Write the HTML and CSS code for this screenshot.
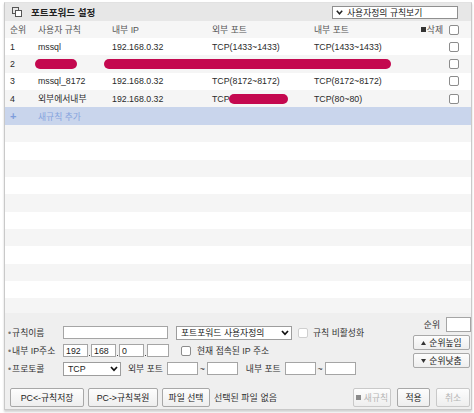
FILE: index.html
```html
<!DOCTYPE html>
<html lang="ko">
<head>
<meta charset="utf-8">
<link rel="stylesheet" href="styles.css">
</head>
<body>
<div class="frame">
  <div class="titlebar">
    <svg class="ticon" width="10" height="10" viewBox="0 0 10 10"><rect x="0.5" y="0.5" width="6" height="6" fill="none" stroke="#555"/><rect x="3.5" y="3.5" width="6" height="6" fill="#fff" stroke="#555"/></svg>
    <span class="title">포트포워드 설정</span>
    <div class="viewsel"><svg width="7" height="5" viewBox="0 0 7 5"><path d="M0.8 0.8 L3.5 3.8 L6.2 0.8" fill="none" stroke="#222" stroke-width="1.5"/></svg><span>사용자정의 규칙보기</span></div>
  </div>
  <div class="table">
    <div class="row head"><span>순위</span><span>사용자 규칙</span><span>내부 IP</span><span>외부 포트</span><span>내부 포트</span><span class="last"><i class="sq"></i>삭제<b class="cb"></b></span></div>
    <div class="row"><span>1</span><span>mssql</span><span>192.168.0.32</span><span>TCP(1433~1433)</span><span>TCP(1433~1433)</span><span class="last"><b class="cb"></b></span></div>
    <div class="row alt"><span>2</span><span><i class="redact r1"></i></span><span class="wide"><i class="redact r2"></i></span><span class="last"><b class="cb"></b></span></div>
    <div class="row"><span>3</span><span>mssql_8172</span><span>192.168.0.32</span><span>TCP(8172~8172)</span><span>TCP(8172~8172)</span><span class="last"><b class="cb"></b></span></div>
    <div class="row alt"><span>4</span><span>외부에서내부</span><span>192.168.0.32</span><span class="tcpr">TCP<i class="redact r3"></i></span><span>TCP(80~80)</span><span class="last"><b class="cb"></b></span></div>
    <div class="row add"><span class="plus">+</span><span>새규칙 추가</span></div>
    <div class="row alt"></div><div class="row"></div>
    <div class="row alt"></div><div class="row"></div>
    <div class="row alt"></div><div class="row"></div>
    <div class="row alt"></div><div class="row"></div>
    <div class="row alt"></div><div class="row"></div>
    <div class="row alt"></div>
  </div>
  <div class="panel">
    <div class="fields">
      <div class="frow">
        <span class="lbl"><em>•</em>규칙이름</span>
        <span class="inp w-name"></span>
        <span class="sel w-type"><span>포트포워드 사용자정의</span><svg width="8" height="6" viewBox="0 0 8 6"><path d="M1 1 L4 4.3 L7 1" fill="none" stroke="#111" stroke-width="1.7"/></svg></span>
        <b class="cb dis m6"></b><span class="txt m5">규칙 비활성화</span>
      </div>
      <div class="frow">
        <span class="lbl"><em>•</em>내부 IP주소</span>
        <span class="inp w-ip">192</span><span class="dot"></span>
        <span class="inp w-ip">168</span><span class="dot"></span>
        <span class="inp w-ip">0</span><span class="dot"></span>
        <span class="inp w-ip4"></span>
        <b class="cb m12"></b><span class="txt m6">현재 접속된 IP 주소</span>
      </div>
      <div class="frow">
        <span class="lbl"><em>•</em>프로토콜</span>
        <span class="sel w-proto"><span>TCP</span><svg width="8" height="6" viewBox="0 0 8 6"><path d="M1 1 L4 4.3 L7 1" fill="none" stroke="#111" stroke-width="1.7"/></svg></span>
        <span class="txt m7">외부 포트</span>
        <span class="inp w-port m4"></span><span class="tilde">~</span><span class="inp w-port"></span>
        <span class="txt m8">내부 포트</span>
        <span class="inp w-port m4"></span><span class="tilde">~</span><span class="inp w-port"></span>
      </div>
    </div>
    <div class="rank">
      <div class="rrow"><span class="txt">순위</span><span class="inp w-rank"></span></div>
      <span class="btn rbtn"><svg width="5" height="4" viewBox="0 0 5 4"><path d="M0 4 L2.5 0 L5 4Z" fill="#333"/></svg>순위높임</span>
      <span class="btn rbtn"><svg width="5" height="4" viewBox="0 0 5 4"><path d="M0 0 L2.5 4 L5 0Z" fill="#333"/></svg>순위낮춤</span>
    </div>
    <div class="actions">
      <span class="btn b-save">PC&lt;-규칙저장</span>
      <span class="btn b-load">PC-&gt;규칙복원</span>
      <span class="btn b-file">파일 선택</span>
      <span class="nofile">선택된 파일 없음</span>
      <div class="right">
        <span class="btn disabled b-new"><i class="sq gray"></i>새규칙</span>
        <span class="btn b-ok">적용</span>
        <span class="btn disabled b-cancel">취소</span>
      </div>
    </div>
  </div>
</div>
</body>
</html>
```

FILE: styles.css
```css
* { box-sizing: border-box; }
html, body { margin: 0; padding: 0; background: #fff; }
body {
  font-family: "Liberation Sans", "Noto Sans CJK KR", sans-serif;
  font-size: 8.8px;
  color: #333;
  width: 474px;
  height: 413px;
  overflow: hidden;
}
.frame {
  margin: 2px 0 0 4px;
  width: 468px;
  height: 408px;
  border: 1px solid #c9c9c9;
  border-top-color: #e2e2e2;
  box-shadow: 0 2px 2px rgba(0,0,0,0.18);
  display: flex;
  flex-direction: column;
  background: #fff;
}
.titlebar {
  height: 18px;
  background: #e7e7e7;
  display: flex;
  align-items: center;
  padding-left: 7px;
  flex: none;
}
.ticon { display: block; }
.title {
  margin-left: 9px;
  font-weight: bold;
  font-size: 9.6px;
  color: #222;
}
.viewsel {
  margin-left: auto;
  margin-right: 13px;
  width: 126px;
  height: 13px;
  background: #fff;
  border: 1px solid #8f8f8f;
  display: flex;
  align-items: center;
  padding-left: 3px;
  color: #222;
}
.viewsel svg { margin-right: 4px; }
.table {
  height: 292px;
  overflow: hidden;
  flex: none;
}
.row {
  display: grid;
  grid-template-columns: 28px 74px 100px 102px 1fr 60px;
  align-items: center;
  height: 17.3px;
  padding-left: 5px;
  white-space: nowrap;
  color: #2a2a2a;
}
.row.head { height: 17px; background: #f6f6f6; color: #555; }
.row.alt { background: #f5f5f5; }
.row.add { background: #c9d5ec; color: #86a4de; height: 18px; }
.plus { font-size: 11px; font-weight: bold; color: #7e9ddb; }
.last {
  grid-column: 6;
  display: flex;
  align-items: center;
  justify-content: flex-end;
  padding-right: 12px;
}
.wide { grid-column: 3 / 6; }
.sq {
  display: inline-block;
  width: 5px;
  height: 5px;
  background: #333;
  margin-right: 1px;
}
.sq.gray { background: #8a8a8a; margin-right: 3px; }
.cb {
  display: inline-block;
  width: 10px;
  height: 10px;
  border: 1px solid #8c8c8c;
  border-radius: 2px;
  background: #fff;
}
.head .cb { margin-left: 6px; }
.cb.dis { border-color: #cfcfcf; }
.redact {
  display: block;
  height: 10px;
  border-radius: 5px;
  background: #c4084f;
}
.r1 { width: 42px; margin-left: -3px; }
.r2 { width: 287px; margin-left: -8px; }
.tcpr { display: flex; align-items: center; }
.r3 { width: 59px; margin-left: -1px; display: inline-block; }
.panel {
  flex: 1;
  background: #efefef;
  display: grid;
  grid-template-columns: 1fr auto;
  padding: 0 0 0 3px;
}
.fields {
  padding-top: 13px;
  display: flex;
  flex-direction: column;
  gap: 5px;
}
.frow {
  display: flex;
  align-items: center;
  height: 13px;
  white-space: nowrap;
}
.lbl { width: 55px; color: #333; }
.lbl em { font-style: normal; color: #777; margin-right: 1px; }
.inp {
  display: inline-flex;
  align-items: center;
  height: 13px;
  background: #fff;
  border: 1px solid #a5a5a5;
  padding-left: 2px;
  color: #222;
}
.w-name { width: 105px; }
.w-ip { width: 25px; }
.w-ip4 { width: 22px; }
.w-port { width: 31px; }
.w-rank { width: 25px; height: 15px; margin-left: 6px; }
.dot { width: 3px; height: 13px; position: relative; }
.dot::after { content: ""; position: absolute; left: 1px; bottom: 1px; width: 1px; height: 1px; background: #444; }
.sel {
  display: inline-flex;
  align-items: center;
  justify-content: space-between;
  height: 14px;
  background: #fff;
  border: 1px solid #9d9d9d;
  padding: 0 2px 0 4px;
  color: #222;
}
.w-type { width: 116px; margin-left: 8px; }
.w-proto { width: 58px; }
.txt { color: #333; }
.tilde { width: 9px; text-align: center; }
.m4 { margin-left: 4px; }
.m5 { margin-left: 5px; }
.m6 { margin-left: 6px; }
.m7 { margin-left: 7px; }
.m8 { margin-left: 8px; }
.m12 { margin-left: 12px; }
.rank {
  padding-top: 4px;
  display: flex;
  flex-direction: column;
  align-items: flex-end;
  gap: 3px;
}
.rrow { display: flex; align-items: center; }
.btn {
  display: inline-flex;
  align-items: center;
  justify-content: center;
  border: 1px solid #a8a8a8;
  border-radius: 2px;
  background: linear-gradient(#fdfdfd, #eeeeee);
  color: #222;
  white-space: nowrap;
}
.rbtn { width: 57px; height: 15px; margin-right: 1px; gap: 2px; }
.rbtn svg { margin-right: 1px; }
.actions {
  grid-column: 1 / -1;
  display: flex;
  align-items: center;
  margin-top: 10px;
  height: 19px;
}
.actions .btn { height: 19px; }
.b-save { width: 74px; margin-left: 2px; }
.b-load { width: 70px; margin-left: 4px; }
.b-file { width: 48px; margin-left: 4px; }
.nofile { margin-left: 4px; color: #333; font-size: 9px; }
.right { margin-left: auto; display: flex; gap: 6px; padding-right: 1px; }
.btn.disabled { color: #b5b5b5; border-color: #c9c9c9; }
.b-new { width: 38px; }
.b-ok { width: 33px; }
.b-cancel { width: 34px; }
```
